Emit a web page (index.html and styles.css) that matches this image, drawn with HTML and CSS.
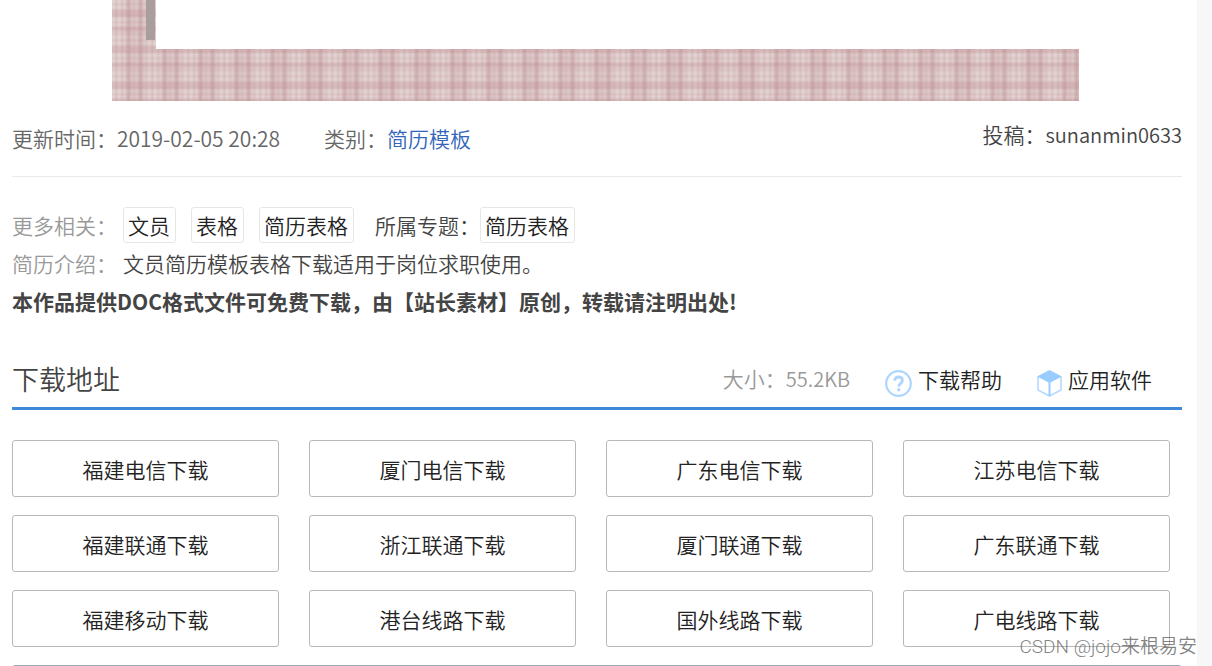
FILE: index.html
```html
<!DOCTYPE html>
<html lang="zh-CN">
<head>
    <meta charset="UTF-8">
    <meta name="viewport" content="width=device-width, initial-scale=1.0">
    <title>文员简历模板表格下载</title>
    <link rel="stylesheet" href="styles.css">
</head>
<body>
    <div class="page">
        <!-- Resume preview -->
        <div class="preview">
            <div class="preview-bar"></div>
            <div class="preview-paper"></div>
        </div>

        <div class="info">
            <div class="info-left">
                <span>更新时间：2019-02-05 20:28</span>
                <span>类别：<a href="#" class="category">简历模板</a></span>
            </div>
            <div class="author">投稿：<span class="value">sunanmin0633</span></div>
        </div>

        <!-- Tags and description -->
        <div class="detail">
            <div class="row">
                <span class="label">更多相关：</span>
                <div class="tags">
                    <a href="#" class="tag">文员</a>
                    <a href="#" class="tag">表格</a>
                    <a href="#" class="tag">简历表格</a>
                </div>
                <span class="topic">所属专题：</span>
                <a href="#" class="tag">简历表格</a>
            </div>
            <div class="row">
                <span class="label">简历介绍：</span>
                <span>文员简历模板表格下载适用于岗位求职使用。</span>
            </div>
            <p class="notice">本作品提供DOC格式文件可免费下载，由【站长素材】原创，转载请注明出处!</p>
        </div>

        <!-- Download -->
        <div class="download-head">
            <h2>下载地址</h2>
            <span class="size">大小：<span class="value">55.2KB</span></span>
            <a href="#" class="head-link">
                <svg width="27" height="27" viewBox="0 0 27 27" fill="none" stroke="#add6ff">
                    <circle cx="13.5" cy="13.5" r="12.3" stroke-width="2.2"/>
                    <path d="M9.7 10.7C9.7 8.3 11.2 7 13.5 7s3.9 1.3 3.9 3.4c0 3-3.7 3-3.7 6.3" stroke-width="2.8"/>
                    <circle cx="13.7" cy="19.7" r="1.7" fill="#add6ff" stroke="none"/>
                </svg>
                下载帮助
            </a>
            <a href="#" class="head-link software">
                <svg width="25" height="27" viewBox="0 0 25 27">
                    <path d="M1 7v13l11.5 6L24 20V7" fill="none" stroke="#b5daff" stroke-width="1.6"/>
                    <path d="M12.5 0L25 6.5 12.5 13 0 6.5z" fill="#99ccff"/>
                    <path d="M12.5 12v14" stroke="#99ccff" stroke-width="2"/>
                </svg>
                应用软件
            </a>
        </div>
        <div class="download-list">
            <a href="#">福建电信下载</a>
            <a href="#">厦门电信下载</a>
            <a href="#">广东电信下载</a>
            <a href="#">江苏电信下载</a>
            <a href="#">福建联通下载</a>
            <a href="#">浙江联通下载</a>
            <a href="#">厦门联通下载</a>
            <a href="#">广东联通下载</a>
            <a href="#">福建移动下载</a>
            <a href="#">港台线路下载</a>
            <a href="#">国外线路下载</a>
            <a href="#">广电线路下载</a>
        </div>
        <div class="bottom-box"></div>
    </div>
    <div class="watermark">CSDN @jojo来根易安</div>
</body>
</html>
```
FILE: styles.css
```css
* {
    box-sizing: border-box;
}

body {
    margin: 0;
    height: 100vh;
    overflow: hidden;
    background-color: #f7f7f7;
    font-family: "Noto Sans CJK SC", sans-serif;
    font-size: 21px;
    font-weight: 350;
    line-height: 38px;
    color: #333;
}

a {
    color: #222;
    text-decoration: none;
}

.page {
    min-height: 100vh;
    margin-right: 15px;
    padding: 0 15px 0 12px;
    background-color: #fff;
}

/* Plaid border of the resume */
.preview {
    display: flex;
    height: 101px;
    margin: 0 103px 0 100px;
    padding-left: 34px;
    background-color: #dcc9c8;
    background-image:
        repeating-linear-gradient(90deg, transparent 0 12px, rgba(180, 128, 134, 0.3) 16px 18px, rgba(190, 140, 148, 0.1) 21px 24px, rgba(180, 128, 134, 0.3) 28px 30px, transparent 33px 36px),
        repeating-linear-gradient(180deg, transparent 0 9px, rgba(190, 135, 143, 0.3) 12px 15px, transparent 18px 25px, rgba(190, 135, 143, 0.25) 28px 30px, transparent 34px 36px),
        repeating-linear-gradient(90deg, rgba(255, 255, 255, 0.1) 0 2px, rgba(180, 120, 130, 0.1) 4px 5px, rgba(255, 255, 255, 0.1) 6px),
        repeating-linear-gradient(180deg, rgba(255, 255, 255, 0.08) 0 2px, rgba(180, 120, 130, 0.08) 4px 5px, rgba(255, 255, 255, 0.08) 6px);
}

.preview-bar {
    width: 9px;
    height: 40px;
    background-color: #a99d9d;
}

.preview-paper {
    flex: 1;
    height: 49px;
    margin-left: 1px;
    background-color: #fff;
}

/* Update time and author */
.info {
    display: flex;
    justify-content: space-between;
    height: 76px;
    padding-top: 14px;
    border-bottom: 1px solid #eaeaea;
}

.info-left {
    display: flex;
    gap: 44px;
    padding-top: 4px;
    color: #666;
}

.category {
    color: #36b;
}

.author {
    color: #444;
}

.value {
    font-size: 20px;
}

.detail {
    padding-top: 29px;
    color: #444;
}

.row {
    display: flex;
    align-items: center;
}

.label {
    width: 111px;
    color: #999;
}

.tags {
    display: flex;
    gap: 15px;
    margin-right: 21px;
}

.tag {
    padding: 0 5px 0 4px;
    border: 1px solid #e6e6e6;
    border-radius: 3px;
    line-height: 34px;
}

.notice {
    margin: 0;
    font-weight: bold;
}

/* Download title bar */
.download-head {
    display: flex;
    align-items: center;
    height: 60px;
    margin-top: 30px;
    padding-right: 30px;
    border-bottom: 3px solid #3f87d9;
}

h2 {
    margin: 0 auto 0 0;
    font-size: 27px;
    font-weight: 350;
    color: #444;
}

.size {
    margin-right: 35px;
    color: #999;
}

.head-link {
    display: flex;
    align-items: center;
    gap: 6px;
}

.head-link svg {
    margin-top: 10px;
}

.software {
    margin-left: 35px;
}

.download-list {
    display: grid;
    grid-template-columns: repeat(4, 1fr);
    gap: 18px 30px;
    padding: 30px 12px 18px 0;
}

.download-list a {
    padding: 9px 0 8px;
    border: 1px solid #b8b8b8;
    border-radius: 3px;
    text-align: center;
}

.bottom-box {
    height: 60px;
    border: 1px solid #9ba6bd;
    border-radius: 3px;
}

.watermark {
    position: absolute;
    right: 15px;
    bottom: 0;
    font-family: Roboto, "Noto Sans CJK SC", sans-serif;
    font-size: 19px;
    color: rgba(90, 90, 90, 0.75);
}
```
